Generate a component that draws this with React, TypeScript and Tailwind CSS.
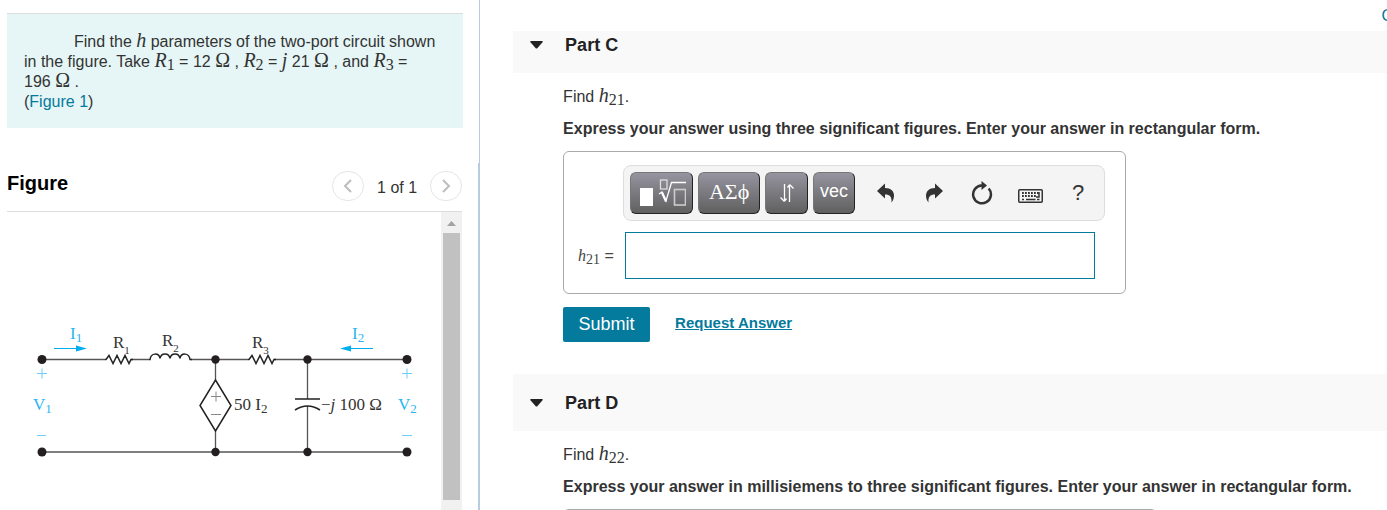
import type { ReactNode } from "react";

interface MathVarProps {
  name: string;
  sub?: string;
}

function MathVar({ name, sub }: MathVarProps) {
  return (
    <span className="font-['Liberation_Serif',serif] text-[20px] leading-0">
      <i>{name}</i>
      {sub && <sub className="bottom-[-3px] text-[16px]">{sub}</sub>}
    </span>
  );
}

function Ohm() {
  return (
    <span className="font-['Liberation_Serif',serif] text-[20px] leading-0">Ω</span>
  );
}

function CircuitDiagram() {
  return (
    <svg
      viewBox="0 0 434 150"
      className="block w-full max-w-[434px]"
      role="img"
      aria-label="Two-port circuit"
      fontFamily="'Liberation Serif', serif"
      fontSize="17"
      fill="#333"
    >
      <g fill="none" stroke="#555" strokeWidth="1.3">
        <path d="M35 39.5H98M124 39.5H142M184 39.5H241M267 39.5H400" />
        <path d="M35 132H400M208.500 40V60M208.500 111V132M300.500 40V79M300.500 86V132" />
      </g>
      <g fill="none" stroke="#222" strokeWidth="1.5">
        <path d="M98 39.500h1l3-4 4 8 4-8 4 8 4-8 4 8 2-4h2" />
        <path d="M241 39.500h1l3-4 4 8 4-8 4 8 4-8 4 8 2-4h2" />
        <path d="M142 39.500h1c1-7 9-7 10-1c1-6 9-6 10 0c1-6 9-6 10 0c1-6 9-6 10 1h2" />
        <path d="M208.500 60L224 85.500L208.500 111L193 85.500Z" />
        <path d="M288 79h25M288 90Q300.500 82 313 90" />
      </g>
      <path d="M204 76.500h10M209 71.500v10M204 94.500h10" stroke="#888" />
      <g fill="#231f20">
        <circle cx="35" cy="39.500" r="4.500" />
        <circle cx="208.500" cy="39.500" r="4.200" />
        <circle cx="300.500" cy="39.500" r="4.200" />
        <circle cx="400" cy="39.500" r="4.500" />
        <circle cx="35" cy="132" r="4.500" />
        <circle cx="208.500" cy="132" r="4.200" />
        <circle cx="300.500" cy="132" r="4.200" />
        <circle cx="400" cy="132" r="4.500" />
      </g>
      <g stroke="#6bcff6">
        <path d="M30 53.500h10M35 48.500v10M30 115.500h9M395 53.500h10M400 48.500v10M395 115.500h10" />
        <path d="M47 28.500h26M341 28.500h25" stroke="#00aeef" />
      </g>
      <path d="M69 25.500l11 3-11 3zM344 25.500l-11 3 11 3z" fill="#00aeef" />
      <g fill="#29b6f0">
        <text x="63" y="19">
          I<tspan fontSize="13" dy="3">1</tspan>
        </text>
        <text x="345" y="19">
          I<tspan fontSize="13" dy="3">2</tspan>
        </text>
        <text x="26" y="90">
          V<tspan fontSize="13" dy="3">1</tspan>
        </text>
        <text x="391" y="90">
          V<tspan fontSize="13" dy="3">2</tspan>
        </text>
      </g>
      <text x="106" y="28">
        R<tspan fontSize="11" dy="6">1</tspan>
      </text>
      <text x="155" y="26">
        R<tspan fontSize="11" dy="6">2</tspan>
      </text>
      <text x="245" y="28">
        R<tspan fontSize="11" dy="6">3</tspan>
      </text>
      <text x="227" y="90">
        50 I<tspan fontSize="13" dy="3">2</tspan>
      </text>
      <text x="314" y="90">
        −<tspan fontStyle="italic">j</tspan> 100 Ω
      </text>
    </svg>
  );
}

function TemplatesIcon() {
  return (
    <svg width="49" height="28" viewBox="0 0 49 28" fill="none">
      <rect x="3" y="9" width="13" height="18" fill="#fff" />
      <rect x="23.500" y="1" width="6.500" height="9" stroke="#ddd" strokeWidth="1.300" />
      <path d="M22 15l3-2 4 9L34.500 3.500H50" stroke="#fff" strokeWidth="1.300" />
      <path d="M25 13.500l4 9" stroke="#fff" strokeWidth="2.200" />
      <rect x="37.500" y="10.500" width="11" height="15.500" stroke="#ccc" strokeWidth="1.600" />
    </svg>
  );
}

function ArrowsIcon() {
  return (
    <svg width="16" height="20" viewBox="0 0 16 20" fill="none" stroke="#fff">
      <path d="M5.500 1v17M10.500 19V2" strokeWidth="1.300" />
      <path d="M1.500 14.500l4 4M14.500 5.500l-4-4" strokeWidth="1.300" />
      <path d="M5.500 18l2-2.500M10.500 2l-2 2.500" strokeWidth="1.300" />
    </svg>
  );
}

function UndoIcon() {
  return (
    <svg width="18" height="20" viewBox="0 0 18 20" fill="#333">
      <path d="M0 8L8 .5V5C14 5 17 8.500 17 12.500C17 15.500 16 17.500 14.500 19.500C15 14 13 11.500 8 11.500V15.500Z" />
    </svg>
  );
}

function RedoIcon() {
  return (
    <svg width="18" height="20" viewBox="0 0 18 20" fill="#333">
      <path d="M18 8L10 .5V5C4 5 1 8.500 1 12.500C1 15.500 2 17.500 3.500 19.500C3 14 5 11.500 10 11.500V15.500Z" />
    </svg>
  );
}

function ResetIcon() {
  return (
    <svg width="22" height="24" viewBox="0 0 22 24" fill="none">
      <path
        d="M13 4.500H10.500A8.900 8.900 0 1 0 17.700 7.500"
        stroke="#333"
        strokeWidth="2.500"
      />
      <path d="M10.500 0L16 4.500L10.500 9Z" fill="#333" />
    </svg>
  );
}

function KeyboardIcon() {
  return (
    <svg width="25" height="20" viewBox="0 -6 25 20" fill="none" stroke="#333">
      <rect x=".75" y=".75" width="23.500" height="12.500" rx="1" strokeWidth="1.500" />
      <path d="M4 4h18M4 7h15" strokeWidth="1.800" strokeDasharray="1.800 1.200" />
      <path d="M4 10.500h2M8 10.500h9.500M19 10.500h2.500M21 3v5h-3" strokeWidth="1.500" />
    </svg>
  );
}

function ChevronIcon({ path }: { path: string }) {
  return (
    <svg width="10" height="14" viewBox="0 0 10 14" fill="none">
      <path d={path} stroke="#bdbdbd" strokeWidth="2" />
    </svg>
  );
}

interface PaletteButtonProps {
  label: string;
  className: string;
  children: ReactNode;
}

function PaletteButton({ label, className, children }: PaletteButtonProps) {
  return (
    <button
      type="button"
      aria-label={label}
      className={`flex h-[42px] shrink-0 items-center justify-center rounded-md border border-t-[#777] border-r-[#222] border-b-[#222] border-l-[#777] bg-linear-to-b from-[#96949f] to-[#606060] text-white ${className}`}
    >
      {children}
    </button>
  );
}

function ToolButton({ label, children }: { label: string; children: ReactNode }) {
  return (
    <button
      type="button"
      aria-label={label}
      className="flex h-10 w-12 shrink-0 items-center justify-center text-[#333]"
    >
      {children}
    </button>
  );
}

function EquationToolbar() {
  return (
    <div className="mr-5 ml-[59px] flex h-14 items-center rounded-lg border border-[#ddd] bg-[#f4f4f4] px-1.5">
      <div className="flex gap-[5px]">
        <PaletteButton label="Templates" className="w-[63px]">
          <TemplatesIcon />
        </PaletteButton>
        <PaletteButton
          label="Symbols"
          className="w-[62px] pb-1 font-['Liberation_Serif',serif] text-[22px]"
        >
          ΑΣϕ
        </PaletteButton>
        <PaletteButton label="Arrows" className="w-[43px]">
          <ArrowsIcon />
        </PaletteButton>
        <PaletteButton label="Vector" className="w-[42px] pb-1 text-[18px]">
          vec
        </PaletteButton>
      </div>
      <div className="ml-[7px] flex">
        <ToolButton label="Undo">
          <UndoIcon />
        </ToolButton>
        <ToolButton label="Redo">
          <RedoIcon />
        </ToolButton>
        <ToolButton label="Reset">
          <ResetIcon />
        </ToolButton>
        <ToolButton label="Keyboard shortcuts">
          <KeyboardIcon />
        </ToolButton>
        <ToolButton label="Help">
          <span className="text-[22px] leading-none">?</span>
        </ToolButton>
      </div>
    </div>
  );
}

interface PartHeaderProps {
  title: string;
  className: string;
}

function PartHeader({ title, className }: PartHeaderProps) {
  return (
    <button
      type="button"
      className={`flex w-full items-center bg-[#f9f9f9] pl-[17px] text-left ${className}`}
    >
      <svg width="13" height="8" viewBox="0 0 13 8" fill="#222">
        <path d="M1 0H12Q13.500 0 12.500 1.300L7.300 7.200Q6.500 8 5.700 7.200L.5 1.300Q-.5 0 1 0Z" />
      </svg>
      <h2 className="ml-[22px] text-[18px] leading-7 font-bold text-[#222]">{title}</h2>
    </button>
  );
}

function PartPrompt({ sub, children }: { sub: string; children: ReactNode }) {
  return (
    <>
      <p className="text-[16px] leading-5">
        Find <MathVar name="h" sub={sub} />.
      </p>
      <p className="mt-3 text-[16px] leading-5 font-bold text-[#333]">{children}</p>
    </>
  );
}

function ProblemPane() {
  return (
    <aside className="flex min-h-0 flex-col border-r border-[#b9cbe0] pt-[13px] pl-[7px]">
      <section className="mr-4 border-t border-[#ddd] bg-[#e6f6f6] px-[17px] pt-[18px] pb-4 text-[16px] leading-5">
        <p className="indent-[50px]">
          Find the <MathVar name="h" /> parameters of the two-port circuit shown in the
          figure. Take <MathVar name="R" sub="1" /> = 12 <Ohm /> ,{" "}
          <MathVar name="R" sub="2" /> = <MathVar name="j" /> 21 <Ohm /> , and{" "}
          <MathVar name="R" sub="3" /> ={" "}
          <span className="whitespace-nowrap">
            196 <Ohm /> .
          </span>
        </p>
        <p>
          (
          <a href="#figure" className="text-[#047a9c]">
            Figure 1
          </a>
          )
        </p>
      </section>

      <section className="mt-[35px] flex min-h-0 flex-1 flex-col border-r border-[#b9cbe0] pt-[5px] pr-4">
        <div className="flex h-11 shrink-0 items-start justify-between border-b border-[#ddd]">
          <h2 className="text-[20px] leading-[30px] font-bold text-black">Figure</h2>
          <div className="flex items-center gap-[13px] pt-[3px]">
            <button
              type="button"
              aria-label="Previous figure"
              className="flex h-[30px] w-8 items-center justify-center rounded-full border border-[#e5e5e5]"
            >
              <ChevronIcon path="M8 1L2 7L8 13" />
            </button>
            <span className="pt-1 text-[16px] leading-5">1 of 1</span>
            <button
              type="button"
              aria-label="Next figure"
              className="flex h-[30px] w-8 items-center justify-center rounded-full border border-[#e5e5e5]"
            >
              <ChevronIcon path="M2 1L8 7L2 13" />
            </button>
          </div>
        </div>

        <div id="figure" className="flex min-h-0 flex-1">
          <div className="min-w-0 flex-1 overflow-hidden pt-[108px]">
            <CircuitDiagram />
          </div>
          <div className="flex w-[21px] flex-col items-center bg-[#f1f1f1] pb-2.5">
            <svg width="9" height="5" viewBox="0 0 9 5" className="mt-[9px] mb-[7px] shrink-0">
              <path d="M0 5L4.500 0L9 5Z" fill="#a3a3a3" />
            </svg>
            <div className="w-[17px] flex-1 bg-[#c1c1c1]" />
          </div>
        </div>
      </section>
    </aside>
  );
}

function AnswerPane() {
  return (
    <main className="min-w-0 overflow-hidden pl-[33px]">
      <div className="flex h-[31px] items-center justify-end">
        <a href="#constants" className="-mr-1.5 text-[16px] leading-5 text-[#047a9c]">
          C
        </a>
      </div>

      <section>
        <PartHeader title="Part C" className="pb-3.5" />
        <div className="pt-3.5 pl-[50px]">
          <PartPrompt sub="21">
            Express your answer using three significant figures. Enter your answer in
            rectangular form.
          </PartPrompt>

          <div className="mt-3 max-w-[563px] rounded-md border border-[#aaa] pt-[13px] pb-3.5">
            <EquationToolbar />
            <div className="mt-[11px] mr-[30px] flex items-center">
              <label
                htmlFor="answer-h21"
                className="w-[61px] shrink-0 pl-3.5 text-[16px] text-[#444]"
              >
                <span className="font-['Liberation_Serif',serif]">
                  <i>h</i>
                  <sub className="text-[14px]">21</sub>
                </span>{" "}
                =
              </label>
              <input
                id="answer-h21"
                type="text"
                className="h-[47px] min-w-0 flex-1 border border-[#047a9c] bg-white px-2 outline-none"
              />
            </div>
          </div>

          <div className="mt-[13px] flex items-center gap-[25px]">
            <button
              type="button"
              className="h-[35px] w-[87px] rounded-xs bg-[#047a9c] text-[18px] text-white"
            >
              Submit
            </button>
            <a
              href="#request-answer"
              className="pb-1 text-[15px] leading-5 font-bold text-[#047a9c] underline"
            >
              Request Answer
            </a>
          </div>
        </div>
      </section>

      <section className="mt-8">
        <PartHeader title="Part D" className="pt-[15px] pb-3.5" />
        <div className="pt-3.5 pl-[50px]">
          <PartPrompt sub="22">
            Express your answer in millisiemens to three significant figures. Enter your
            answer in rectangular form.
          </PartPrompt>
          <div className="mt-3 h-36 max-w-[594px] rounded-md border border-[#aaa]" />
        </div>
      </section>
    </main>
  );
}

export default function App() {
  return (
    <div className="grid h-screen grid-cols-[minmax(0,9fr)_minmax(0,17fr)] grid-rows-[minmax(0,1fr)] overflow-hidden bg-white font-['Liberation_Sans',Arial,sans-serif] text-[#333]">
      <ProblemPane />
      <AnswerPane />
    </div>
  );
}
